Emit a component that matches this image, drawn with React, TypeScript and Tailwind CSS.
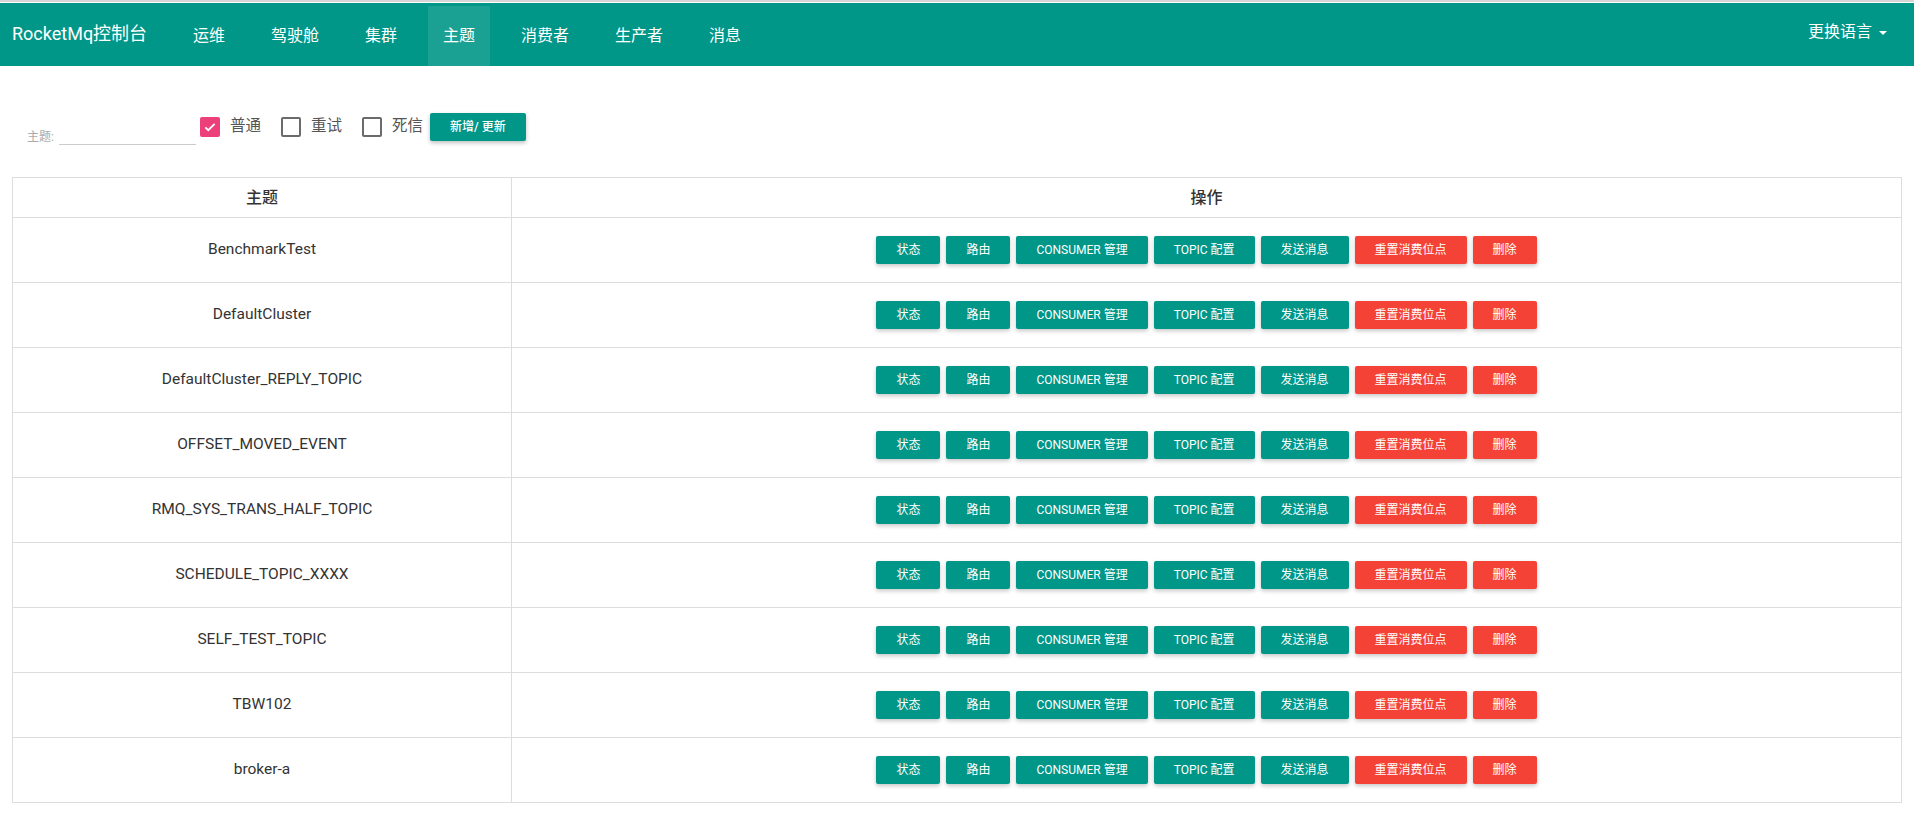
import React from "react";

/* ---------------- DATA ---------------- */

const navItems = ["运维", "驾驶舱", "集群", "主题", "消费者", "生产者", "消息"];

const topics = [
  "BenchmarkTest",
  "DefaultCluster",
  "DefaultCluster_REPLY_TOPIC",
  "OFFSET_MOVED_EVENT",
  "RMQ_SYS_TRANS_HALF_TOPIC",
  "SCHEDULE_TOPIC_XXXX",
  "SELF_TEST_TOPIC",
  "TBW102",
  "broker-a",
];

const actions = [
  { label: "状态", danger: false },
  { label: "路由", danger: false },
  { label: "CONSUMER 管理", danger: false },
  { label: "TOPIC 配置", danger: false },
  { label: "发送消息", danger: false },
  { label: "重置消费位点", danger: true },
  { label: "删除", danger: true },
];

/* ---------------- NAVBAR ---------------- */

const Navbar = () => (
  <div className="h-[63px] bg-[#009688] text-white flex items-stretch">
    <div className="w-[178px] pl-[12px] flex items-center text-[18px] leading-none -mt-[2px]">
      RocketMq控制台
    </div>

    <ul className="flex gap-[16px] items-end">
      {navItems.map((item) => (
        <li
          key={item}
          className={`h-[60px] px-[15px] flex items-center text-[16px] ${
            item === "主题" ? "bg-white/10" : ""
          }`}
        >
          {item}
        </li>
      ))}
    </ul>

    <div className="ml-auto pr-[27px] flex items-center text-[16px] -mt-[6px]">
      更换语言
      <span className="ml-[7px] mt-[2px] w-0 h-0 border-l-[4px] border-r-[4px] border-t-[4px] border-l-transparent border-r-transparent border-t-white" />
    </div>
  </div>
);

/* ---------------- FILTER ---------------- */

const Checkbox = ({ label, checked }: { label: string; checked?: boolean }) => (
  <div className="flex items-start">
    {checked ? (
      <div className="mt-[4px] w-[20px] h-[20px] rounded-[2px] bg-[#ec407a] flex items-center justify-center">
        <svg width="14" height="14" viewBox="0 0 24 24" fill="none">
          <path d="M4 12.5l5 5L20 6.5" stroke="white" strokeWidth="3" />
        </svg>
      </div>
    ) : (
      <div className="mt-[4px] w-[20px] h-[20px] rounded-[2px] border-2 border-[#6b6b6b]" />
    )}
    <span className="ml-[10px] text-[15.5px] leading-[26px] text-[#555]">{label}</span>
  </div>
);

const Filter = () => (
  <div className="mt-[47px] pl-[27px] flex items-start h-[28px]">
    <div className="flex items-end h-[32px]">
      <span className="text-[12px] leading-[16px] text-[#aaa]">主题:</span>
      <div className="ml-[5px] w-[137px] h-[24px] border-b border-[#ccc]" />
    </div>

    <div className="ml-[4px] flex gap-[20px]">
      <Checkbox label="普通" checked />
      <Checkbox label="重试" />
      <Checkbox label="死信" />
    </div>

    <button className="ml-[7px] h-[28px] px-[20px] rounded-[2px] bg-[#009688] text-white text-[12px] font-medium shadow-[0_2px_4px_rgba(0,0,0,0.25)]">
      新增/ 更新
    </button>
  </div>
);

/* ---------------- TABLE ---------------- */

const ActionButton = ({ label, danger }: { label: string; danger: boolean }) => (
  <button
    className={`h-[28px] px-[20px] rounded-[2px] text-white text-[12px] whitespace-nowrap shadow-[0_2px_4px_rgba(0,0,0,0.22)] ${
      danger ? "bg-[#f44336]" : "bg-[#009688]"
    }`}
  >
    {label}
  </button>
);

const TopicTable = () => (
  <div className="mx-[12px] mt-[36px] border border-[#ddd]">
    <div className="flex h-[39px] text-[16px] font-medium text-[#333]">
      <div className="w-[498px] flex items-center justify-center">主题</div>
      <div className="flex-1 border-l border-[#ddd] flex items-center justify-center">操作</div>
    </div>

    {topics.map((t) => (
      <div key={t} className="flex h-[65px] border-t border-[#ddd]">
        <div className="w-[498px] flex items-center justify-center text-[15.5px] text-[#333]">
          {t}
        </div>
        <div className="flex-1 border-l border-[#ddd] flex items-center justify-center gap-[6px]">
          {actions.map((a) => (
            <ActionButton key={a.label} label={a.label} danger={a.danger} />
          ))}
        </div>
      </div>
    ))}
  </div>
);

/* ---------------- PAGE ---------------- */

export default function App() {
  return (
    <div className="min-h-screen bg-white font-['Roboto','Noto_Sans_CJK_SC',sans-serif]">
      <div className="h-[3px] border-t-2 border-[#d6d6d6]" />
      <Navbar />
      <Filter />
      <TopicTable />
    </div>
  );
}
